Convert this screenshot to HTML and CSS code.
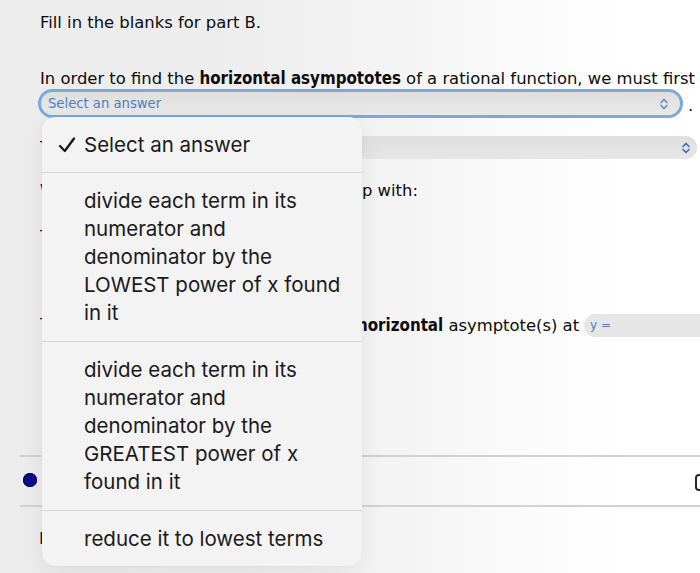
FILE: index.html
```html
<!DOCTYPE html>
<html>
<head>
<meta charset="utf-8">
<link rel="stylesheet" href="styles.css">
</head>
<body>
<div class="page">
  <p class="title">Fill in the blanks for part B.</p>
  <p class="line">In order to find the <b>horizontal asympototes</b> of a rational function, we must first</p>
  <div class="sel-row">
    <div class="select focus">
      <span class="sel-text">Select an answer</span>
      <svg class="chev" viewBox="0 0 10 14" width="10" height="14"><path d="M2 5.5 L5 2.5 L8 5.5 M2 8.5 L5 11.5 L8 8.5"/></svg>
    </div>
    <span class="period">.</span>
  </div>
  <div class="row row2">
    <span class="hid">T</span>
    <div class="select plain">
      <svg class="chev blue" viewBox="0 0 10 14" width="10" height="14"><path d="M2 5.5 L5 2.5 L8 5.5 M2 8.5 L5 11.5 L8 8.5"/></svg>
    </div>
  </div>
  <div class="row row3"><span class="hid">W</span><span>p with:</span></div>
  <div class="row row3b"><span class="hid">T</span></div>
  <div class="row row4">
    <span class="hid">T</span>
    <span class="vis"><b>horizontal</b> asymptote(s) at</span>
    <span class="ans">y =</span>
  </div>
  <div class="result">
    <span class="radio"></span>
    <span class="box"></span>
  </div>
  <p class="foot">I</p>
</div>

<div class="dropdown">
  <div class="opt selected">
    <svg class="check" viewBox="0 0 18 18" width="18" height="18"><path d="M2 10 L6.8 15 L16 2.5"/></svg>
    <span>Select an answer</span>
  </div>
  <div class="opt">divide each term in its numerator and denominator by the LOWEST power of x found in it</div>
  <div class="opt">divide each term in its numerator and denominator by the GREATEST power of x found in it</div>
  <div class="opt">reduce it to lowest terms</div>
</div>
</body>
</html>
```
FILE: styles.css
```css
html, body {
  margin: 0;
  height: 100%;
}
body {
  width: 700px;
  height: 573px;
  overflow: hidden;
  position: relative;
  background: linear-gradient(90deg, #ececec 0%, #eeeeee 35%, #f5f5f5 60%, #fcfcfc 78%, #ffffff 90%);
  font-family: "DejaVu Sans", Verdana, sans-serif;
  font-size: 16.4px;
  color: #0c0c0c;
}
b {
  font-family: "DejaVu Sans Condensed", "DejaVu Sans", sans-serif;
  font-weight: bold;
  font-size: 16.8px;
}
.page {
  padding: 13px 3px 0 40px;
}
p { margin: 0; }
.title { line-height: 20px; }
.line { line-height: 20px; margin-top: 35px; white-space: nowrap; }
.sel-row {
  display: flex;
  align-items: center;
  height: 29px;
  margin-left: -2px;
}
.select {
  box-sizing: border-box;
  display: flex;
  align-items: center;
  justify-content: space-between;
}
.select.focus {
  width: 645px;
  height: 29px;
  border: 3px solid #78a9df;
  border-radius: 15px;
  background: linear-gradient(180deg, #dfdfdf, #e9e9e9);
  padding: 0 11px 0 7px;
}
.sel-text {
  font-size: 13.2px;
  color: #4b7fc2;
}
.chev path {
  fill: none;
  stroke: #6a8fbd;
  stroke-width: 1.7;
  stroke-linecap: round;
  stroke-linejoin: round;
}
.chev.blue path { stroke: #3f72bd; }
.period { margin-left: 5px; line-height: 20px; position: relative; top: 2px; }
.row {
  display: grid;
  grid-template-columns: 317px 1fr;
  align-items: center;
  line-height: 20px;
  white-space: nowrap;
}
.hid { overflow: hidden; }
.row2 { margin-top: 18px; height: 23px; }
.select.plain {
  height: 23px;
  border-radius: 0 12px 12px 0;
  background: linear-gradient(180deg, #dfdfdf, #e6e6e6);
  justify-content: flex-end;
  padding-right: 6px;
}
.row3 { margin-top: 22px; grid-template-columns: 322px 1fr; }
.row3b { margin-top: 26px; }
.row4 {
  margin-top: 66px;
  height: 24px;
  grid-template-columns: 317px auto 1fr;
}
.ans {
  margin-left: 5px;
  height: 23px;
  border-radius: 12px 0 0 12px;
  background: #e6e6e6;
  font-size: 12px;
  color: #4b7fc2;
  line-height: 23px;
  padding-left: 6px;
  margin-right: -3px;
}
.result {
  margin: 118px -3px 0 -20px;
  height: 48px;
  border-top: 2px solid #d2d2d2;
  border-bottom: 2px solid #d2d2d2;
  display: flex;
  align-items: center;
  justify-content: space-between;
  padding-left: 3px;
}
.radio {
  width: 14px;
  height: 14px;
  border-radius: 50%;
  background: #0c0c8e;
  box-shadow: inset 0 0 0 1px #04044a;
  margin-top: -3px;
}
.box {
  width: 18px;
  height: 17px;
  box-sizing: border-box;
  border: 2px solid #2a2a2a;
  border-radius: 4px;
  margin-right: -13px;
  margin-top: 2px;
}
.foot { margin-top: 22px; margin-left: -1px; line-height: 20px; }

.dropdown {
  position: absolute;
  left: 42px;
  top: 117px;
  width: 320px;
  background: #f3f3f3;
  border-radius: 13px;
  box-shadow: 0 6px 24px rgba(0, 0, 0, 0.07), 0 0 2px rgba(0, 0, 0, 0.05);
  font-family: Inter, "Liberation Sans", Arial, sans-serif;
  font-size: 20.5px;
  color: #1a1a1a;
  overflow: hidden;
}
.opt {
  padding: 14px 12px 14px 42px;
  line-height: 28px;
  border-top: 1px solid #d6d6d6;
}
.opt:first-child { border-top: none; padding-bottom: 13px; }
.opt:last-child { padding-bottom: 13px; }
.opt.selected {
  display: flex;
  align-items: center;
  padding-left: 16px;
  gap: 8px;
}
.check path {
  fill: none;
  stroke: #1a1a1a;
  stroke-width: 2.3;
  stroke-linecap: round;
  stroke-linejoin: round;
}
```
